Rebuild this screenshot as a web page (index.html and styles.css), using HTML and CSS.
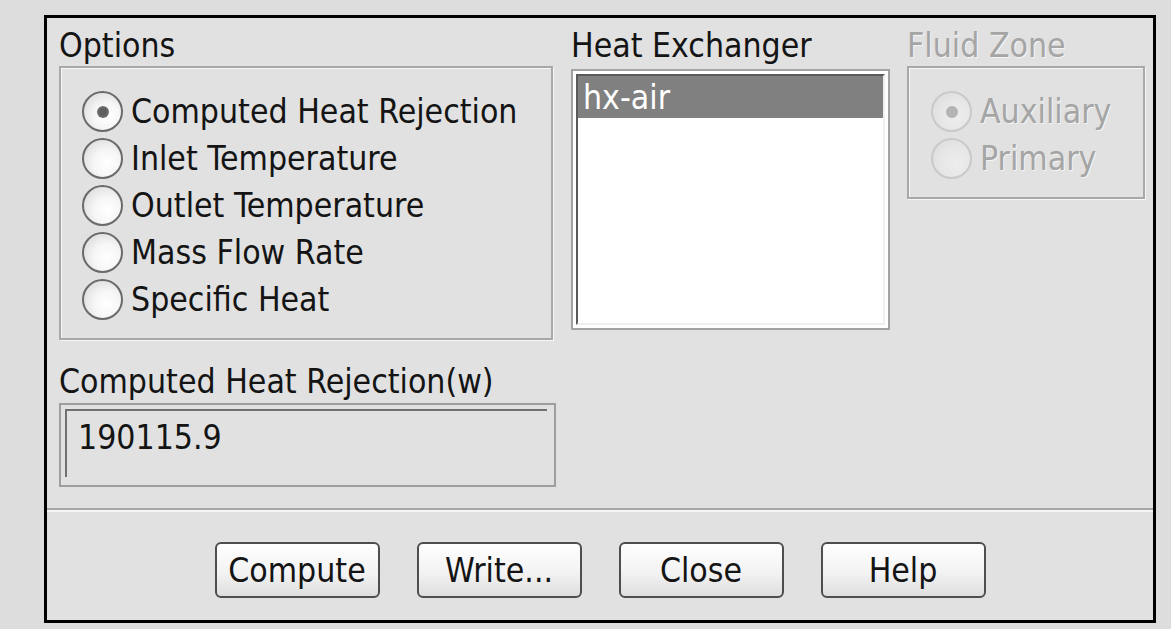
FILE: index.html
```html
<!DOCTYPE html>
<html lang="en">
<head>
  <meta charset="UTF-8" />
  <meta name="viewport" content="width=device-width, initial-scale=1.0" />
  <title>Heat Exchanger Report</title>
  <link rel="stylesheet" href="styles.css">
</head>
<body>
  <div class="dialog">
    <div class="panes">
      <div class="col">
        <div class="caption">Options</div>
        <div class="group options-group">
          <label class="radio checked"><span class="mark"></span>Computed Heat Rejection</label>
          <label class="radio"><span class="mark"></span>Inlet Temperature</label>
          <label class="radio"><span class="mark"></span>Outlet Temperature</label>
          <label class="radio"><span class="mark"></span>Mass Flow Rate</label>
          <label class="radio"><span class="mark"></span>Specific Heat</label>
        </div>
        <div class="caption value-caption">Computed Heat Rejection(w)</div>
        <div class="field">
          <div class="field-inner">190115.9</div>
        </div>
      </div>

      <div class="col">
        <div class="caption">Heat Exchanger</div>
        <div class="listbox">
          <div class="list-inner">
            <div class="list-item selected">hx-air</div>
          </div>
        </div>
      </div>

      <div class="col disabled">
        <div class="caption">Fluid Zone</div>
        <div class="group zone-group">
          <label class="radio checked"><span class="mark"></span>Auxiliary</label>
          <label class="radio"><span class="mark"></span>Primary</label>
        </div>
      </div>
    </div>

    <div class="separator"></div>

    <div class="actions">
      <button>Compute</button>
      <button>Write...</button>
      <button>Close</button>
      <button>Help</button>
    </div>
  </div>
</body>
</html>
```

FILE: styles.css
```css
body {
  margin: 0;
  background: #dcdddc;
  font-family: "DejaVu Sans Condensed", "DejaVu Sans", sans-serif;
  font-size: 33.5px;
  color: #141414;
}
.dialog {
  margin: 15px 0 0 44px;
  width: 1106px;
  height: 602px;
  border: 3px solid #000;
  background: #e1e1e1;
  display: flex;
  flex-direction: column;
}
.panes {
  display: grid;
  grid-template-columns: 497px 321px 238px;
  column-gap: 15px;
  padding-left: 12px;
  height: 490px;
}
.caption {
  padding-top: 8px;
  line-height: 40px;
  white-space: nowrap;
}
.group {
  border: 2px solid #a8a8a8;
  box-shadow: 1px 1px 0 #f6f6f6, inset 1px 1px 0 #f6f6f6;
  box-sizing: border-box;
}
.options-group {
  width: 494px;
  height: 274px;
  padding: 20px 0 0 21px;
}
.zone-group {
  height: 133px;
  padding: 20px 0 0 22px;
}
.radio {
  display: flex;
  align-items: center;
  gap: 8px;
  height: 47px;
  line-height: 47px;
  white-space: nowrap;
}
.mark {
  width: 37px;
  height: 37px;
  border: 2px solid #6a6a6a;
  border-radius: 50%;
  background: radial-gradient(circle at 62% 62%, #ffffff 0%, #f6f6f6 40%, #d2d2d2 100%);
  display: flex;
  align-items: center;
  justify-content: center;
  flex: none;
}
.radio.checked .mark::after {
  content: "";
  width: 12px;
  height: 12px;
  border-radius: 50%;
  background: radial-gradient(circle, #5e5e5e 40%, #8a8a8a 100%);
}
.value-caption {
  padding-top: 22px;
}
.field {
  margin-top: 1px;
  height: 84px;
  border: 2px solid #9e9e9e;
  padding: 4px 7px 8px 4px;
  box-sizing: border-box;
}
.field-inner {
  height: 100%;
  border-top: 2px solid #707070;
  border-left: 2px solid #707070;
  padding: 7px 0 0 11px;
  line-height: 40px;
  box-sizing: border-box;
}
.listbox {
  margin-top: 3px;
  width: 319px;
  height: 261px;
  border: 2px solid #a3a3a3;
  background: #fff;
  padding: 3px;
  box-sizing: border-box;
}
.list-inner {
  height: 100%;
  border-left: 2px solid #5a5a5a;
  border-top: 2px solid #5a5a5a;
  border-right: 2px solid #efefef;
  border-bottom: 2px solid #efefef;
  box-sizing: border-box;
}
.list-item {
  height: 42px;
  padding: 2px 0 0 5px;
  line-height: 39px;
  box-sizing: border-box;
}
.list-item.selected {
  background: #808080;
  color: #fff;
}
.disabled {
  color: #a5a5a5;
  text-shadow: 1px 1px 0 #f4f4f4;
}
.disabled .mark {
  border-color: #c9c9c9;
  background: radial-gradient(circle at 62% 62%, #eeeeee 0%, #e6e6e6 50%, #d9d9d9 100%);
}
.disabled .radio.checked .mark::after {
  background: #b4b4b4;
}
.separator {
  border-top: 2px solid #a6a6a6;
  border-bottom: 2px solid #f6f6f6;
}
.actions {
  display: flex;
  justify-content: center;
  gap: 37px;
  padding-top: 30px;
}
button {
  width: 165px;
  height: 56px;
  border: 2px solid #4e4e4e;
  border-radius: 6px;
  background: linear-gradient(#fefefe, #f3f3f3 55%, #dedede);
  font-family: inherit;
  font-size: 33.5px;
  color: #141414;
  padding: 2px 0 0;
  line-height: 50px;
}
```
